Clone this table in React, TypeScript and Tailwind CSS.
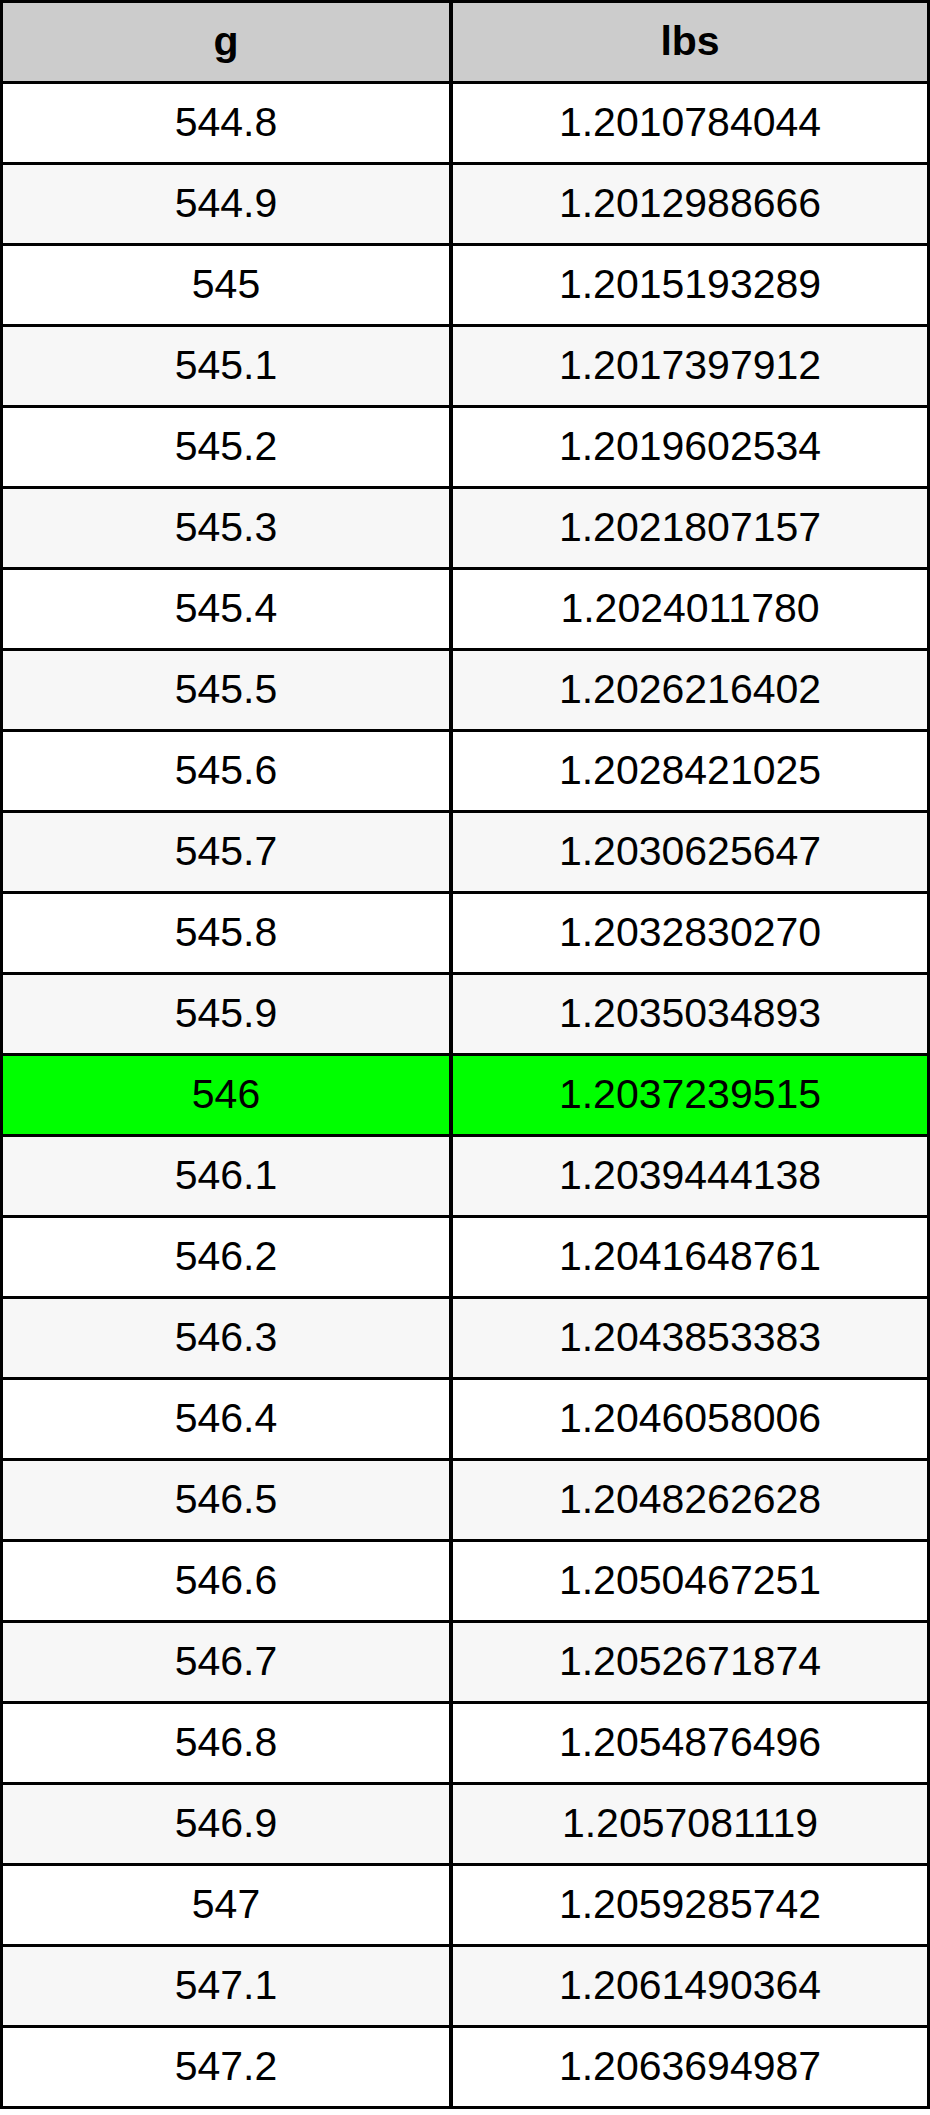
import * as React from 'react';

const rows: [string, string][] = [
  ['544.8', '1.2010784044'],
  ['544.9', '1.2012988666'],
  ['545', '1.2015193289'],
  ['545.1', '1.2017397912'],
  ['545.2', '1.2019602534'],
  ['545.3', '1.2021807157'],
  ['545.4', '1.2024011780'],
  ['545.5', '1.2026216402'],
  ['545.6', '1.2028421025'],
  ['545.7', '1.2030625647'],
  ['545.8', '1.2032830270'],
  ['545.9', '1.2035034893'],
  ['546', '1.2037239515'],
  ['546.1', '1.2039444138'],
  ['546.2', '1.2041648761'],
  ['546.3', '1.2043853383'],
  ['546.4', '1.2046058006'],
  ['546.5', '1.2048262628'],
  ['546.6', '1.2050467251'],
  ['546.7', '1.2052671874'],
  ['546.8', '1.2054876496'],
  ['546.9', '1.2057081119'],
  ['547', '1.2059285742'],
  ['547.1', '1.2061490364'],
  ['547.2', '1.2063694987'],
];

export default function App() {
  return (
    <div className="w-[930px] bg-white font-['Liberation_Sans',Arial,sans-serif] text-[41px] text-black">
      <div className="border-[3px] border-black">
        <div className="grid h-[78px] grid-cols-[450px_1fr] bg-[#cccccc] font-bold">
          <div className="flex items-center justify-center border-r-[4px] border-black">g</div>
          <div className="flex items-center justify-center">lbs</div>
        </div>
        {rows.map(([g, lbs], i) => {
          const bg = g === '546' ? 'bg-[#00ff00]' : i % 2 === 0 ? 'bg-white' : 'bg-[#f7f7f7]';
          return (
            <div key={g} className={`grid h-[81px] grid-cols-[450px_1fr] border-t-[3px] border-black ${bg}`}>
              <div className="flex items-center justify-center border-r-[4px] border-black">{g}</div>
              <div className="flex items-center justify-center">{lbs}</div>
            </div>
          );
        })}
      </div>
    </div>
  );
}
